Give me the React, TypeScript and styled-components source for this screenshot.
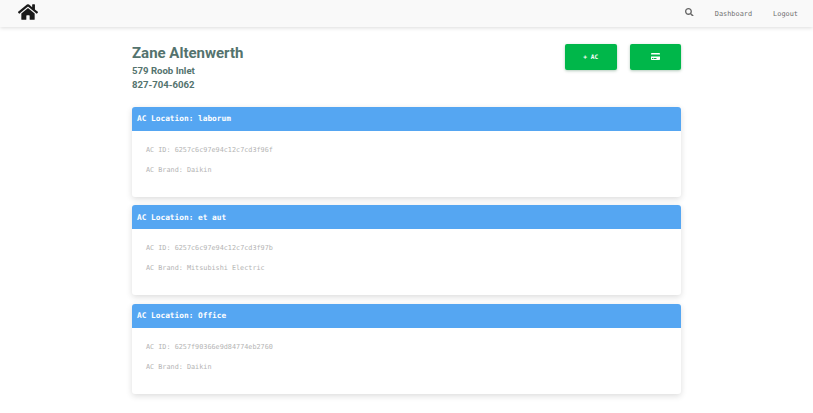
import styled, { createGlobalStyle } from "styled-components";
import { FaHome, FaSearch, FaCreditCard } from "react-icons/fa";

const GlobalStyle = createGlobalStyle`
  html, body {
    margin: 0;
    padding: 0;
    background: #fff;
    font-family: "Roboto", "Liberation Sans", sans-serif;
    overflow: hidden;
  }
`;

const Navbar = styled.nav`
  height: 27px;
  padding: 0 15px 0 18px;

  display: flex;
  align-items: center;
  justify-content: space-between;

  background: #f9f9f9;
  box-shadow: 0 1px 4px rgba(0, 0, 0, 0.14);
`;

const HomeLink = styled.a`
  display: flex;
  margin-top: -3px;
  color: #1a1a1a;
  font-size: 20px;
`;

const NavRight = styled.div`
  display: flex;
  align-items: center;
`;

const SearchIcon = styled.span`
  display: flex;
  margin-top: -3px;
  color: #666;
  font-size: 8.5px;
`;

const NavLink = styled.a`
  margin-left: 21px;
  font-family: "DejaVu Sans Mono", monospace;
  font-size: 6.9px;
  color: #707070;
`;

const Main = styled.main`
  width: 549px;
  margin: 0 auto;
  padding-top: 16px;
`;

const Header = styled.header`
  height: 63.8px;

  display: flex;
  justify-content: space-between;
  align-items: flex-start;
`;

const Name = styled.h1`
  margin: 0 0 1px;
  font-size: 15px;
  line-height: 20px;
  font-weight: 700;
  color: #54736e;
`;

const Detail = styled.p`
  margin: 0;
  font-size: 9.6px;
  line-height: 14px;
  font-weight: 700;
  color: #54736e;
`;

const Actions = styled.div`
  display: flex;
  gap: 13px;
  padding-top: 0.5px;
`;

const ActionButton = styled.button`
  width: 51.5px;
  height: 26px;
  padding: 0;
  border: none;
  border-radius: 2px;

  display: flex;
  align-items: center;
  justify-content: center;

  background: #00b74a;
  color: #fff;
  font-family: "DejaVu Sans Mono", monospace;
  font-size: 6.2px;
  font-weight: 700;
  box-shadow: 0 1px 3px rgba(0, 80, 30, 0.3);
`;

const Card = styled.section`
  margin-bottom: 8.5px;
  border-radius: 3px;
  background: #fff;
  box-shadow: 0 2px 6px rgba(0, 0, 0, 0.14);
`;

const CardHeader = styled.div`
  height: 24px;
  padding: 0 5px;

  display: flex;
  align-items: center;

  border-radius: 3px 3px 0 0;
  background: #55a6f2;
  color: #fff;
  font-family: "DejaVu Sans Mono", monospace;
  font-size: 7.8px;
  font-weight: 700;
  white-space: pre;
`;

const CardBody = styled.div`
  height: 66px;
  padding: 14px 14px 0;
  box-sizing: border-box;
`;

const CardLine = styled.p`
  margin: 0 0 10px;
  font-family: "DejaVu Sans Mono", monospace;
  font-size: 6.8px;
  line-height: 10px;
  color: #b4b4b4;
`;

type AcUnit = {
  location: string;
  id: string;
  brand: string;
};

const units: AcUnit[] = [
  { location: "laborum", id: "6257c6c97e94c12c7cd3f96f", brand: "Daikin" },
  { location: "et aut", id: "6257c6c97e94c12c7cd3f97b", brand: "Mitsubishi Electric" },
  { location: "Office", id: "6257f90366e9d84774eb2760", brand: "Daikin" },
];

const App = () => {
  return (
    <>
      <GlobalStyle />
      <Navbar>
        <HomeLink>
          <FaHome />
        </HomeLink>
        <NavRight>
          <SearchIcon>
            <FaSearch />
          </SearchIcon>
          <NavLink>Dashboard</NavLink>
          <NavLink>Logout</NavLink>
        </NavRight>
      </Navbar>
      <Main>
        <Header>
          <div>
            <Name>Zane Altenwerth</Name>
            <Detail>579 Roob Inlet</Detail>
            <Detail>827-704-6062</Detail>
          </div>
          <Actions>
            <ActionButton>+ AC</ActionButton>
            <ActionButton>
              <FaCreditCard size={9} />
            </ActionButton>
          </Actions>
        </Header>
        {units.map((unit) => (
          <Card key={unit.id}>
            <CardHeader>AC Location: {unit.location}</CardHeader>
            <CardBody>
              <CardLine>AC ID: {unit.id}</CardLine>
              <CardLine>AC Brand: {unit.brand}</CardLine>
            </CardBody>
          </Card>
        ))}
      </Main>
    </>
  );
};

export default App;
